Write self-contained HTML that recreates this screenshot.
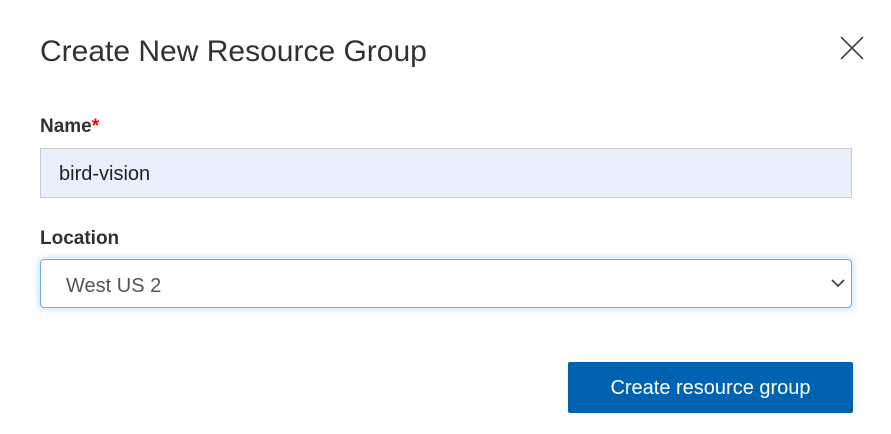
<!DOCTYPE html>
<html><head><style>
body{margin:0;width:891px;height:434px;background:#fff;font-family:"Liberation Sans",sans-serif;position:relative;overflow:hidden}
.a{position:absolute}
</style></head><body>
<div class="a" style="left:40px;top:35px;font-size:30px;color:#323130;">Create New Resource Group</div>
<svg class="a" style="left:840px;top:36px" width="24" height="24"><path d="M1 1L23 23M23 1L1 23" stroke="#444" stroke-width="1.6"/></svg>
<div class="a" style="left:40px;top:116px;font-size:19px;color:#323130;font-weight:bold">Name<span style="color:#e00">*</span></div>
<div class="a" style="left:40px;top:148px;width:810px;height:48px;background:#e8f0fe;border:1px solid #ccc;"></div>
<div class="a" style="left:59px;top:163px;font-size:20px;color:#222">bird-vision</div>
<div class="a" style="left:40px;top:228px;font-size:19px;color:#323130;font-weight:bold">Location</div>
<div class="a" style="left:40px;top:259px;width:810px;height:47px;border:1px solid #66afe9;border-radius:4px;box-shadow:0 0 8px rgba(102,175,233,.5)"></div>
<div class="a" style="left:66px;top:275px;font-size:20px;color:#555">West US 2</div>
<svg class="a" style="left:831px;top:279px" width="14" height="9"><path d="M1 1L7 7L13 1" stroke="#444" stroke-width="1.8" fill="none"/></svg>
<div class="a" style="left:568px;top:362px;width:285px;height:51px;background:#0063b1;border-radius:2px;color:#fff;font-size:20px;text-align:center;line-height:53px">Create resource group</div>
</body></html>
